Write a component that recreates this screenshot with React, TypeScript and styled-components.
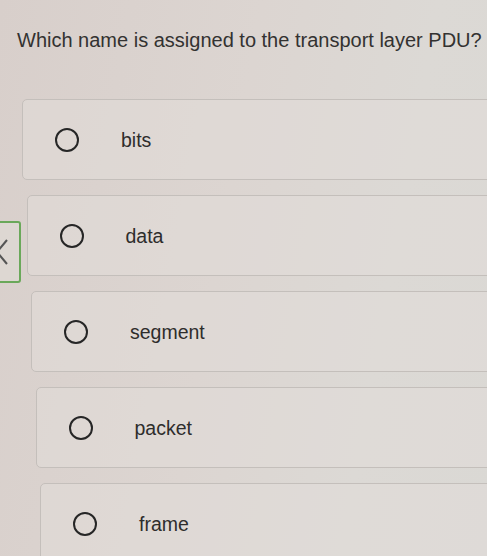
import React from "react";
import styled, { createGlobalStyle } from "styled-components";

const Global = createGlobalStyle`
  html, body { margin: 0; padding: 0; }
  body {
    width: 487px;
    height: 556px;
    overflow: hidden;
    background: linear-gradient(100deg, #d8cfcb 0%, #dcd5d1 45%, #dcd9d5 75%, #dad8d4 100%);
    font-family: "Liberation Sans", Arial, sans-serif;
  }
`;

const Page = styled.div`
  position: relative;
  width: 487px;
  height: 556px;
  overflow: hidden;
`;

const Question = styled.h1`
  margin: 0;
  padding: 29px 0 0 17px;
  font-size: 20px;
  font-weight: 400;
  color: #333231;
  white-space: nowrap;
`;

const Options = styled.div`
  display: flex;
  flex-direction: column;
  gap: 15px;
  margin-top: 47px;
`;

const Card = styled.label<{ $indent: number }>`
  display: flex;
  align-items: center;
  height: 81px;
  margin-left: ${(p) => p.$indent}px;
  margin-right: -20px;
  padding-left: 32px;
  border: 1px solid #c4bfbb;
  border-radius: 5px;
  background: rgba(226, 221, 217, 0.55);
  box-sizing: border-box;
`;

const Radio = styled.span`
  width: 24px;
  height: 24px;
  border-radius: 50%;
  border: 2.5px solid #262626;
  box-sizing: border-box;
  flex: none;
`;

const Label = styled.span`
  margin-left: 42px;
  margin-top: 2px;
  font-size: 19.5px;
  color: #2e2d2c;
`;

const BackTab = styled.div`
  position: absolute;
  left: -22px;
  top: 221px;
  width: 43px;
  height: 62px;
  border: 2px solid #6aa85a;
  border-radius: 3px;
  display: flex;
  align-items: center;
  justify-content: flex-end;
  padding-right: 11px;
  box-sizing: border-box;
  background: rgba(225, 222, 216, 0.5);
`;

const options = ["bits", "data", "segment", "packet", "frame"];

export default function App() {
  return (
    <Page>
      <Global />
      <Question>Which name is assigned to the transport layer PDU?</Question>
      <Options>
        {options.map((o, i) => (
          <Card key={o} $indent={22 + i * 4.5}>
            <Radio />
            <Label>{o}</Label>
          </Card>
        ))}
      </Options>
      <BackTab>
        <svg width="12" height="26" viewBox="0 0 12 26">
          <path d="M11 1 L1 13 L11 25" fill="none" stroke="#555" strokeWidth="2" />
        </svg>
      </BackTab>
    </Page>
  );
}
